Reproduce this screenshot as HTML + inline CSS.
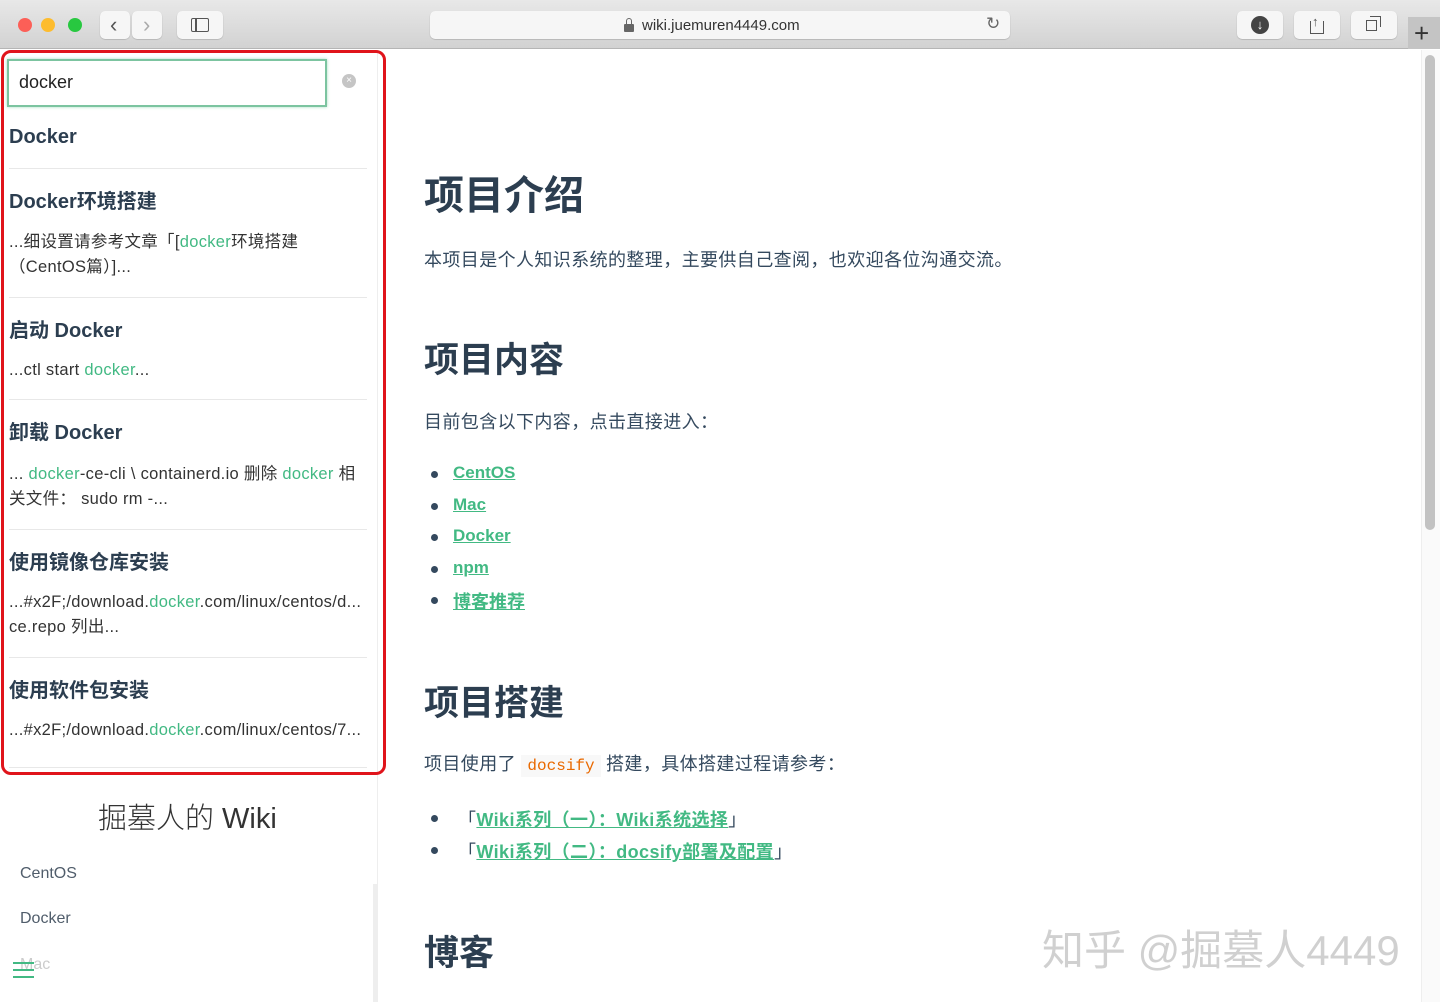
<!DOCTYPE html>
<html><head><meta charset="utf-8"><style>
*{margin:0;padding:0;box-sizing:border-box}
body{width:1440px;height:1002px;overflow:hidden;background:#fff;font-family:"Liberation Sans","Noto Sans CJK SC",sans-serif;color:#34495e;position:relative}
.a{position:absolute;white-space:nowrap}
.bar{position:absolute;left:0;top:0;width:1440px;height:49px;background:linear-gradient(#e8e8e8,#d2d2d2);border-bottom:1px solid #b5b5b5}
.btn{position:absolute;top:11px;height:28px;background:#f6f6f6;border-radius:5px;box-shadow:0 0.5px 1px rgba(0,0,0,.25)}
.dot{position:absolute;top:18px;width:14px;height:14px;border-radius:50%}
.g{color:#42b983}
.h{font-size:20px;font-weight:bold;color:#2c3e50}
.p{font-size:16.5px;color:#333;line-height:25px;letter-spacing:0.3px}
.hr{position:absolute;left:9px;width:358px;height:1px;background:#e8e8e8}
.m{font-size:18px;color:#34495e;letter-spacing:0.4px}
.mh{font-size:40px;font-weight:bold;color:#2c3e50}
.li{font-size:17px;font-weight:bold;color:#42b983;text-decoration:underline}
.bul{position:absolute;left:431px;width:7px;height:7px;border-radius:50%;background:#34495e}
</style></head><body>
<div class="bar"></div>
<div class="dot" style="left:18px;background:#fc5f57"></div>
<div class="dot" style="left:41px;background:#fdbc2e"></div>
<div class="dot" style="left:68px;background:#28c840"></div>
<div class="btn" style="left:100px;width:30px"></div><div class="btn" style="left:132px;width:30px"></div>
<div class="a" style="left:110px;top:12px;font-size:22px;color:#555">‹</div><div class="a" style="left:143px;top:12px;font-size:22px;color:#aaa">›</div>
<div class="btn" style="left:177px;width:46px"></div>
<div class="a" style="left:191px;top:18px;width:18px;height:14px;border:1.5px solid #555;border-radius:2px"></div>
<div class="a" style="left:195px;top:19px;width:1.5px;height:12px;background:#555"></div>
<div class="btn" style="left:430px;width:580px"></div>
<div class="a" style="left:624px;top:18px;width:10px;height:8px;background:#666;border-radius:1px;margin-top:6px"></div>
<div class="a" style="left:626px;top:18px;width:6px;height:8px;border:1.5px solid #666;border-radius:3px 3px 0 0"></div>
<div class="a" style="left:642px;top:17px;font-size:15px;color:#333">wiki.juemuren4449.com</div>
<div class="a" style="left:986px;top:14px;font-size:17px;color:#666">↻</div>
<div class="btn" style="left:1237px;width:46px"></div><div class="btn" style="left:1294px;width:46px"></div><div class="btn" style="left:1351px;width:46px"></div>
<div class="a" style="left:1251px;top:16px;width:18px;height:18px;border-radius:50%;background:#444;color:#fff;font-size:13px;text-align:center;line-height:18px;font-weight:bold">↓</div>
<div class="a" style="left:1310px;top:21px;width:14px;height:13px;border:1.5px solid #555;border-top:none"></div>
<div class="a" style="left:1312px;top:14px;font-size:13px;color:#555">↑</div>
<div class="a" style="left:1366px;top:20px;width:11px;height:11px;border:1.5px solid #555"></div>
<div class="a" style="left:1370px;top:16px;width:11px;height:11px;border-top:1.5px solid #555;border-right:1.5px solid #555"></div>
<div class="a" style="left:1408px;top:17px;width:32px;height:32px;background:#c4c4c4"></div>
<div class="a" style="left:1414px;top:18px;font-size:26px;color:#333;line-height:30px">+</div>

<!-- sidebar -->
<div class="a" style="left:377px;top:50px;width:1px;height:952px;background:#eee"></div>
<div class="a" style="left:373px;top:884px;width:4px;height:118px;background:#eee"></div>
<div class="a" style="left:7px;top:59px;width:320px;height:48px;border:2px solid #7cc4a0;box-shadow:0 0 3px #a5dcc0"></div>
<div class="a" style="left:19px;top:72px;font-size:18px;color:#222">docker</div>
<div class="a" style="left:342px;top:74px;width:14px;height:14px;border-radius:50%;background:#c5c5c5;color:#fff;font-size:10px;text-align:center;line-height:14px">×</div>
<div class="a h" style="left:9px;top:126px">Docker</div>
<div class="hr" style="top:168px"></div>
<div class="a h" style="left:9px;top:185px">Docker环境搭建</div>
<div class="a p" style="left:9px;top:230px">...细设置请参考文章「[<span class="g">docker</span>环境搭建<br>（CentOS篇）]...</div>
<div class="hr" style="top:297px"></div>
<div class="a h" style="left:9px;top:314px">启动 Docker</div>
<div class="a p" style="left:9px;top:358px">...ctl start <span class="g">docker</span>...</div>
<div class="hr" style="top:399px"></div>
<div class="a h" style="left:9px;top:416px">卸载 Docker</div>
<div class="a p" style="left:9px;top:462px">... <span class="g">docker</span>-ce-cli \ containerd.io 删除 <span class="g">docker</span> 相<br>关文件：  sudo rm -...</div>
<div class="hr" style="top:529px"></div>
<div class="a h" style="left:9px;top:546px">使用镜像仓库安装</div>
<div class="a p" style="left:9px;top:590px">...#x2F;/download.<span class="g">docker</span>.com/linux/centos/d...<br>ce.repo 列出...</div>
<div class="hr" style="top:657px"></div>
<div class="a h" style="left:9px;top:674px">使用软件包安装</div>
<div class="a p" style="left:9px;top:718px">...#x2F;/download.<span class="g">docker</span>.com/linux/centos/7...</div>
<div class="hr" style="top:767px"></div>
<div class="a" style="left:1px;top:50px;width:385px;height:725px;border:3px solid #e0141b;border-radius:10px"></div>
<div class="a" style="left:98px;top:795px;font-size:29px;color:#333;font-weight:300">掘墓人的 Wiki</div>
<div class="a" style="left:20px;top:865px;font-size:16px;color:#505d6b">CentOS</div>
<div class="a" style="left:20px;top:910px;font-size:16px;color:#505d6b">Docker</div>
<div class="a" style="left:20px;top:956px;font-size:16px;color:#ccc">Mac</div>
<div class="a" style="left:13px;top:962px;width:21px;height:2px;background:#42b983;box-shadow:0 7px 0 #42b983,0 14px 0 #42b983"></div>

<!-- main -->
<div class="a mh" style="left:424px;top:163px">项目介绍</div>
<div class="a m" style="left:424px;top:246px">本项目是个人知识系统的整理，主要供自己查阅，也欢迎各位沟通交流。</div>
<div class="a mh" style="left:424px;top:332px;font-size:35px">项目内容</div>
<div class="a m" style="left:424px;top:408px">目前包含以下内容，点击直接进入：</div>
<div class="bul" style="top:471px"></div><div class="a li" style="left:453px;top:463px">CentOS</div>
<div class="bul" style="top:503px"></div><div class="a li" style="left:453px;top:495px">Mac</div>
<div class="bul" style="top:534px"></div><div class="a li" style="left:453px;top:526px">Docker</div>
<div class="bul" style="top:566px"></div><div class="a li" style="left:453px;top:558px">npm</div>
<div class="bul" style="top:597px"></div><div class="a li" style="left:453px;top:588px;font-size:18px">博客推荐</div>
<div class="a mh" style="left:424px;top:675px;font-size:35px">项目搭建</div>
<div class="a m" style="left:424px;top:750px">项目使用了 <span style="font-family:'Liberation Mono',monospace;color:#e96900;background:#f8f8f8;padding:2px 6px;font-size:16px;letter-spacing:0">docsify</span> 搭建，具体搭建过程请参考：</div>
<div class="bul" style="top:815px"></div><div class="a m" style="left:458px;top:806px">「<span class="li" style="font-size:18px">Wiki系列（一）：Wiki系统选择</span>」</div>
<div class="bul" style="top:847px"></div><div class="a m" style="left:458px;top:838px">「<span class="li" style="font-size:18px">Wiki系列（二）：docsify部署及配置</span>」</div>
<div class="a mh" style="left:424px;top:925px;font-size:35px">博客</div>
<div class="a" style="left:1042px;top:917px;font-size:42px;color:rgba(120,120,120,.35)">知乎 @掘墓人4449</div>
<div class="a" style="left:1421px;top:50px;width:19px;height:952px;background:#fafafa;border-left:1px solid #eee"></div>
<div class="a" style="left:1425px;top:55px;width:10px;height:475px;border-radius:5px;background:#c2c2c2"></div>
</body></html>
